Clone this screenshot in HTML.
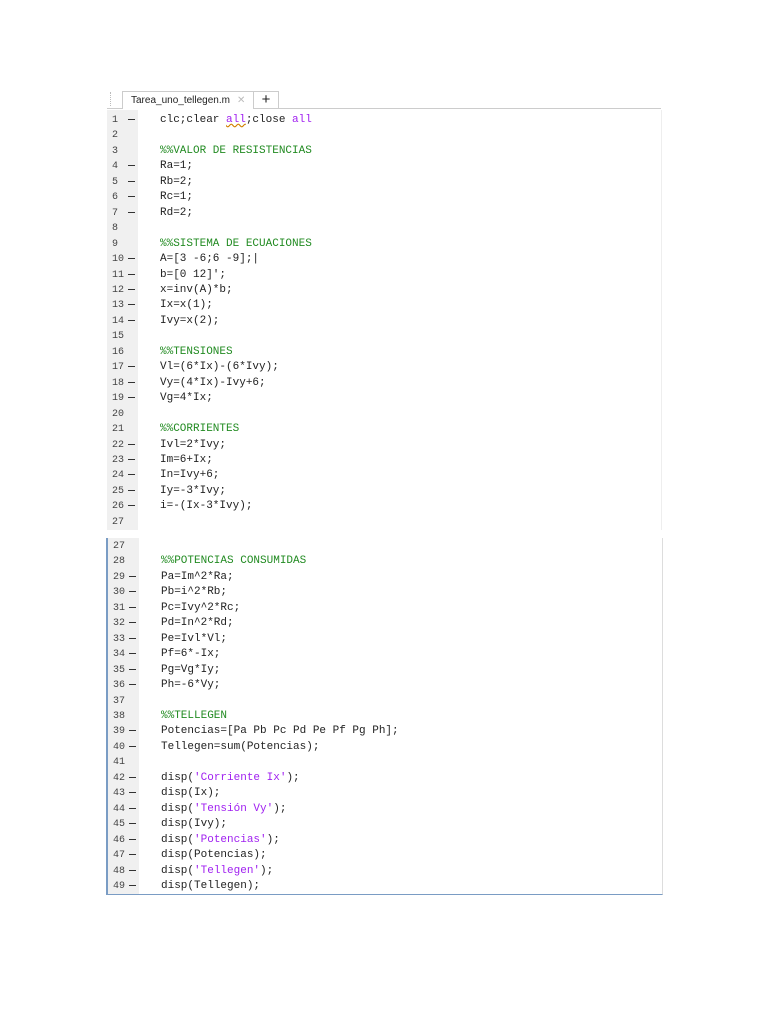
<!DOCTYPE html>
<html><head><meta charset="utf-8"><style>
body{margin:0;width:768px;height:1024px;background:#fff;position:relative;overflow:hidden;font-family:"Liberation Mono",monospace;font-size:11px;color:#222}
.panel{position:absolute;left:107px;width:554px;background:#fff}
.gut{position:absolute;left:0;top:0;bottom:0;width:31px;background:#f0f0f0}
.ln{position:relative;height:15.46px;line-height:15.46px;white-space:pre}
.n{position:absolute;left:5px;font-size:10px;color:#444}
.d{position:absolute;left:21px;top:6px;width:7px;height:1px;background:#333;font-size:0;color:transparent}
.c{position:absolute;left:53px}
.g{color:#228b22}.p{color:#a020f0}
</style></head><body>
<div style="position:absolute;left:107px;top:90px;width:554px;height:18px;background:#fff;border-bottom:1px solid #ccc">
 <div style="position:absolute;left:3px;top:2px;width:6px;height:14px;border-left:1px dotted #bbb"></div>
 <div style="position:absolute;left:15px;top:1px;width:130px;height:17px;border:1px solid #ccc;border-bottom:none;background:#fff;font-family:'Liberation Sans',sans-serif;font-size:10px;line-height:17px;color:#222"><span style="position:absolute;left:8px">Tarea_uno_tellegen.m</span><span style="position:absolute;left:114px;color:#bbb">✕</span></div>
 <div style="position:absolute;left:146px;top:1px;width:24px;height:17px;border:1px solid #ccc;border-bottom:none;font-family:'Liberation Sans',sans-serif;font-size:15px;line-height:16px;text-align:center">+</div>
</div>
<div class="panel" style="top:110px;height:420px;border-right:1px solid #eee">
<div class="gut"></div>
<div style="position:relative;top:3px">
<div class="ln"><span class="n">1</span><span class="d">–</span><span class="c">clc;clear <span class="p" style="text-decoration:underline wavy #d08000">all</span>;close <span class="p">all</span></span></div>
<div class="ln"><span class="n">2</span></div>
<div class="ln"><span class="n">3</span><span class="c g">%%VALOR DE RESISTENCIAS</span></div>
<div class="ln"><span class="n">4</span><span class="d">–</span><span class="c">Ra=1;</span></div>
<div class="ln"><span class="n">5</span><span class="d">–</span><span class="c">Rb=2;</span></div>
<div class="ln"><span class="n">6</span><span class="d">–</span><span class="c">Rc=1;</span></div>
<div class="ln"><span class="n">7</span><span class="d">–</span><span class="c">Rd=2;</span></div>
<div class="ln"><span class="n">8</span></div>
<div class="ln"><span class="n">9</span><span class="c g">%%SISTEMA DE ECUACIONES</span></div>
<div class="ln"><span class="n">10</span><span class="d">–</span><span class="c">A=[3 -6;6 -9];|</span></div>
<div class="ln"><span class="n">11</span><span class="d">–</span><span class="c">b=[0 12]';</span></div>
<div class="ln"><span class="n">12</span><span class="d">–</span><span class="c">x=inv(A)*b;</span></div>
<div class="ln"><span class="n">13</span><span class="d">–</span><span class="c">Ix=x(1);</span></div>
<div class="ln"><span class="n">14</span><span class="d">–</span><span class="c">Ivy=x(2);</span></div>
<div class="ln"><span class="n">15</span></div>
<div class="ln"><span class="n">16</span><span class="c g">%%TENSIONES</span></div>
<div class="ln"><span class="n">17</span><span class="d">–</span><span class="c">Vl=(6*Ix)-(6*Ivy);</span></div>
<div class="ln"><span class="n">18</span><span class="d">–</span><span class="c">Vy=(4*Ix)-Ivy+6;</span></div>
<div class="ln"><span class="n">19</span><span class="d">–</span><span class="c">Vg=4*Ix;</span></div>
<div class="ln"><span class="n">20</span></div>
<div class="ln"><span class="n">21</span><span class="c g">%%CORRIENTES</span></div>
<div class="ln"><span class="n">22</span><span class="d">–</span><span class="c">Ivl=2*Ivy;</span></div>
<div class="ln"><span class="n">23</span><span class="d">–</span><span class="c">Im=6+Ix;</span></div>
<div class="ln"><span class="n">24</span><span class="d">–</span><span class="c">In=Ivy+6;</span></div>
<div class="ln"><span class="n">25</span><span class="d">–</span><span class="c">Iy=-3*Ivy;</span></div>
<div class="ln"><span class="n">26</span><span class="d">–</span><span class="c">i=-(Ix-3*Ivy);</span></div>
<div class="ln"><span class="n">27</span></div>
</div></div>
<div class="panel" style="top:538px;height:356px;border-left:2px solid #7a9cc4;border-bottom:1px solid #7a9cc4;border-right:1px solid #ddd;left:106px">
<div class="gut"></div>
<div style="position:relative;top:1px">
<div class="ln"><span class="n">27</span></div>
<div class="ln"><span class="n">28</span><span class="c g">%%POTENCIAS CONSUMIDAS</span></div>
<div class="ln"><span class="n">29</span><span class="d">–</span><span class="c">Pa=Im^2*Ra;</span></div>
<div class="ln"><span class="n">30</span><span class="d">–</span><span class="c">Pb=i^2*Rb;</span></div>
<div class="ln"><span class="n">31</span><span class="d">–</span><span class="c">Pc=Ivy^2*Rc;</span></div>
<div class="ln"><span class="n">32</span><span class="d">–</span><span class="c">Pd=In^2*Rd;</span></div>
<div class="ln"><span class="n">33</span><span class="d">–</span><span class="c">Pe=Ivl*Vl;</span></div>
<div class="ln"><span class="n">34</span><span class="d">–</span><span class="c">Pf=6*-Ix;</span></div>
<div class="ln"><span class="n">35</span><span class="d">–</span><span class="c">Pg=Vg*Iy;</span></div>
<div class="ln"><span class="n">36</span><span class="d">–</span><span class="c">Ph=-6*Vy;</span></div>
<div class="ln"><span class="n">37</span></div>
<div class="ln"><span class="n">38</span><span class="c g">%%TELLEGEN</span></div>
<div class="ln"><span class="n">39</span><span class="d">–</span><span class="c">Potencias=[Pa Pb Pc Pd Pe Pf Pg Ph];</span></div>
<div class="ln"><span class="n">40</span><span class="d">–</span><span class="c">Tellegen=sum(Potencias);</span></div>
<div class="ln"><span class="n">41</span></div>
<div class="ln"><span class="n">42</span><span class="d">–</span><span class="c">disp(<span class="p">'Corriente Ix'</span>);</span></div>
<div class="ln"><span class="n">43</span><span class="d">–</span><span class="c">disp(Ix);</span></div>
<div class="ln"><span class="n">44</span><span class="d">–</span><span class="c">disp(<span class="p">'Tensión Vy'</span>);</span></div>
<div class="ln"><span class="n">45</span><span class="d">–</span><span class="c">disp(Ivy);</span></div>
<div class="ln"><span class="n">46</span><span class="d">–</span><span class="c">disp(<span class="p">'Potencias'</span>);</span></div>
<div class="ln"><span class="n">47</span><span class="d">–</span><span class="c">disp(Potencias);</span></div>
<div class="ln"><span class="n">48</span><span class="d">–</span><span class="c">disp(<span class="p">'Tellegen'</span>);</span></div>
<div class="ln"><span class="n">49</span><span class="d">–</span><span class="c">disp(Tellegen);</span></div>
</div></div>
</body></html>
